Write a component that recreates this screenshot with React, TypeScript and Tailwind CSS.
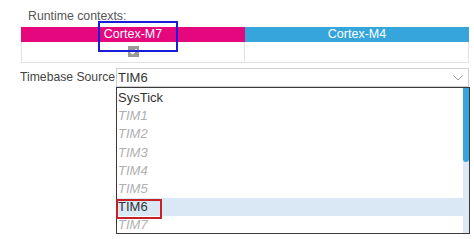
import React from "react";

const items: { label: string; disabled: boolean; selected?: boolean }[] = [
  { label: "SysTick", disabled: false },
  { label: "TIM1", disabled: true },
  { label: "TIM2", disabled: true },
  { label: "TIM3", disabled: true },
  { label: "TIM4", disabled: true },
  { label: "TIM5", disabled: true },
  { label: "TIM6", disabled: false, selected: true },
  { label: "TIM7", disabled: true },
];

export default function App() {
  return (
    <div
      className="relative w-[474px] h-[239px] overflow-hidden bg-white text-[13px] text-[#444]"
      style={{ fontFamily: '"Liberation Sans", Arial, sans-serif' }}
    >
      <div className="pt-[9px] pl-[28px] h-[27px] leading-[15px] text-[12.3px] text-[#555]">Runtime contexts:</div>
      <div className="ml-[21px] w-[448px]">
        <div className="grid grid-cols-2 h-[15px] text-white text-[12.5px] leading-[15px]">
          <div className="bg-[#e5077e] text-center">Cortex-M7</div>
          <div className="bg-[#36a5db] text-center">Cortex-M4</div>
        </div>
        <div className="grid grid-cols-2 h-[21px] border-x border-b border-[#e2e2e2]">
          <div className="flex justify-center pt-[4px] border-r border-[#e2e2e2]">
            <div className="w-[11px] h-[11px] bg-[#9a9a9a] flex items-center justify-center">
              <svg width="9" height="9" viewBox="0 0 9 9">
                <path d="M1.5 4.6 L3.6 6.6 L7.6 2.4" stroke="#fff" strokeWidth="1.6" fill="none" />
              </svg>
            </div>
          </div>
          <div />
        </div>
      </div>

      <div className="flex items-center mt-[5px] h-[19px]">
        <div className="w-[116px] shrink-0 pl-[20px] text-[#444] leading-[19px] text-[12.2px] whitespace-nowrap">Timebase Source</div>
        <div className="w-[353px] h-[19px] border border-[#cfcfcf] flex items-center pl-[1px] pr-[5px] justify-between text-[#333]">
          <span className="leading-[17px]">TIM6</span>
          <svg width="10" height="6" viewBox="0 0 10 6">
            <path d="M0.5 0.5 L5 5 L9.5 0.5" stroke="#999" strokeWidth="1" fill="none" />
          </svg>
        </div>
      </div>

      <div className="ml-[116px] w-[354px] h-[147px] border border-[#3a3a3a] flex">
        <div className="flex-1 pt-[1px]">
          {items.map((it) => (
            <div
              key={it.label}
              className={
                "h-[18.2px] leading-[18.2px] pl-[1px] " +
                (it.selected ? "bg-[#dae8f5] text-[#333] " : "") +
                (it.disabled ? "italic text-[#b0b0b0]" : "text-[#333]")
              }
            >
              {it.label}
            </div>
          ))}
        </div>
        <div className="w-[6px] bg-[#dce9f5] flex flex-col">
          <div className="h-[74px] bg-[#36a5db] rounded-b-[3px]" />
        </div>
      </div>

      <div className="absolute left-[98px] top-[21px] w-[80px] h-[31px] border-2 border-[#1b1bdc]" />
      <div className="absolute left-[116px] top-[199px] w-[46px] h-[20px] border-2 border-[#c42128]" />
    </div>
  );
}
